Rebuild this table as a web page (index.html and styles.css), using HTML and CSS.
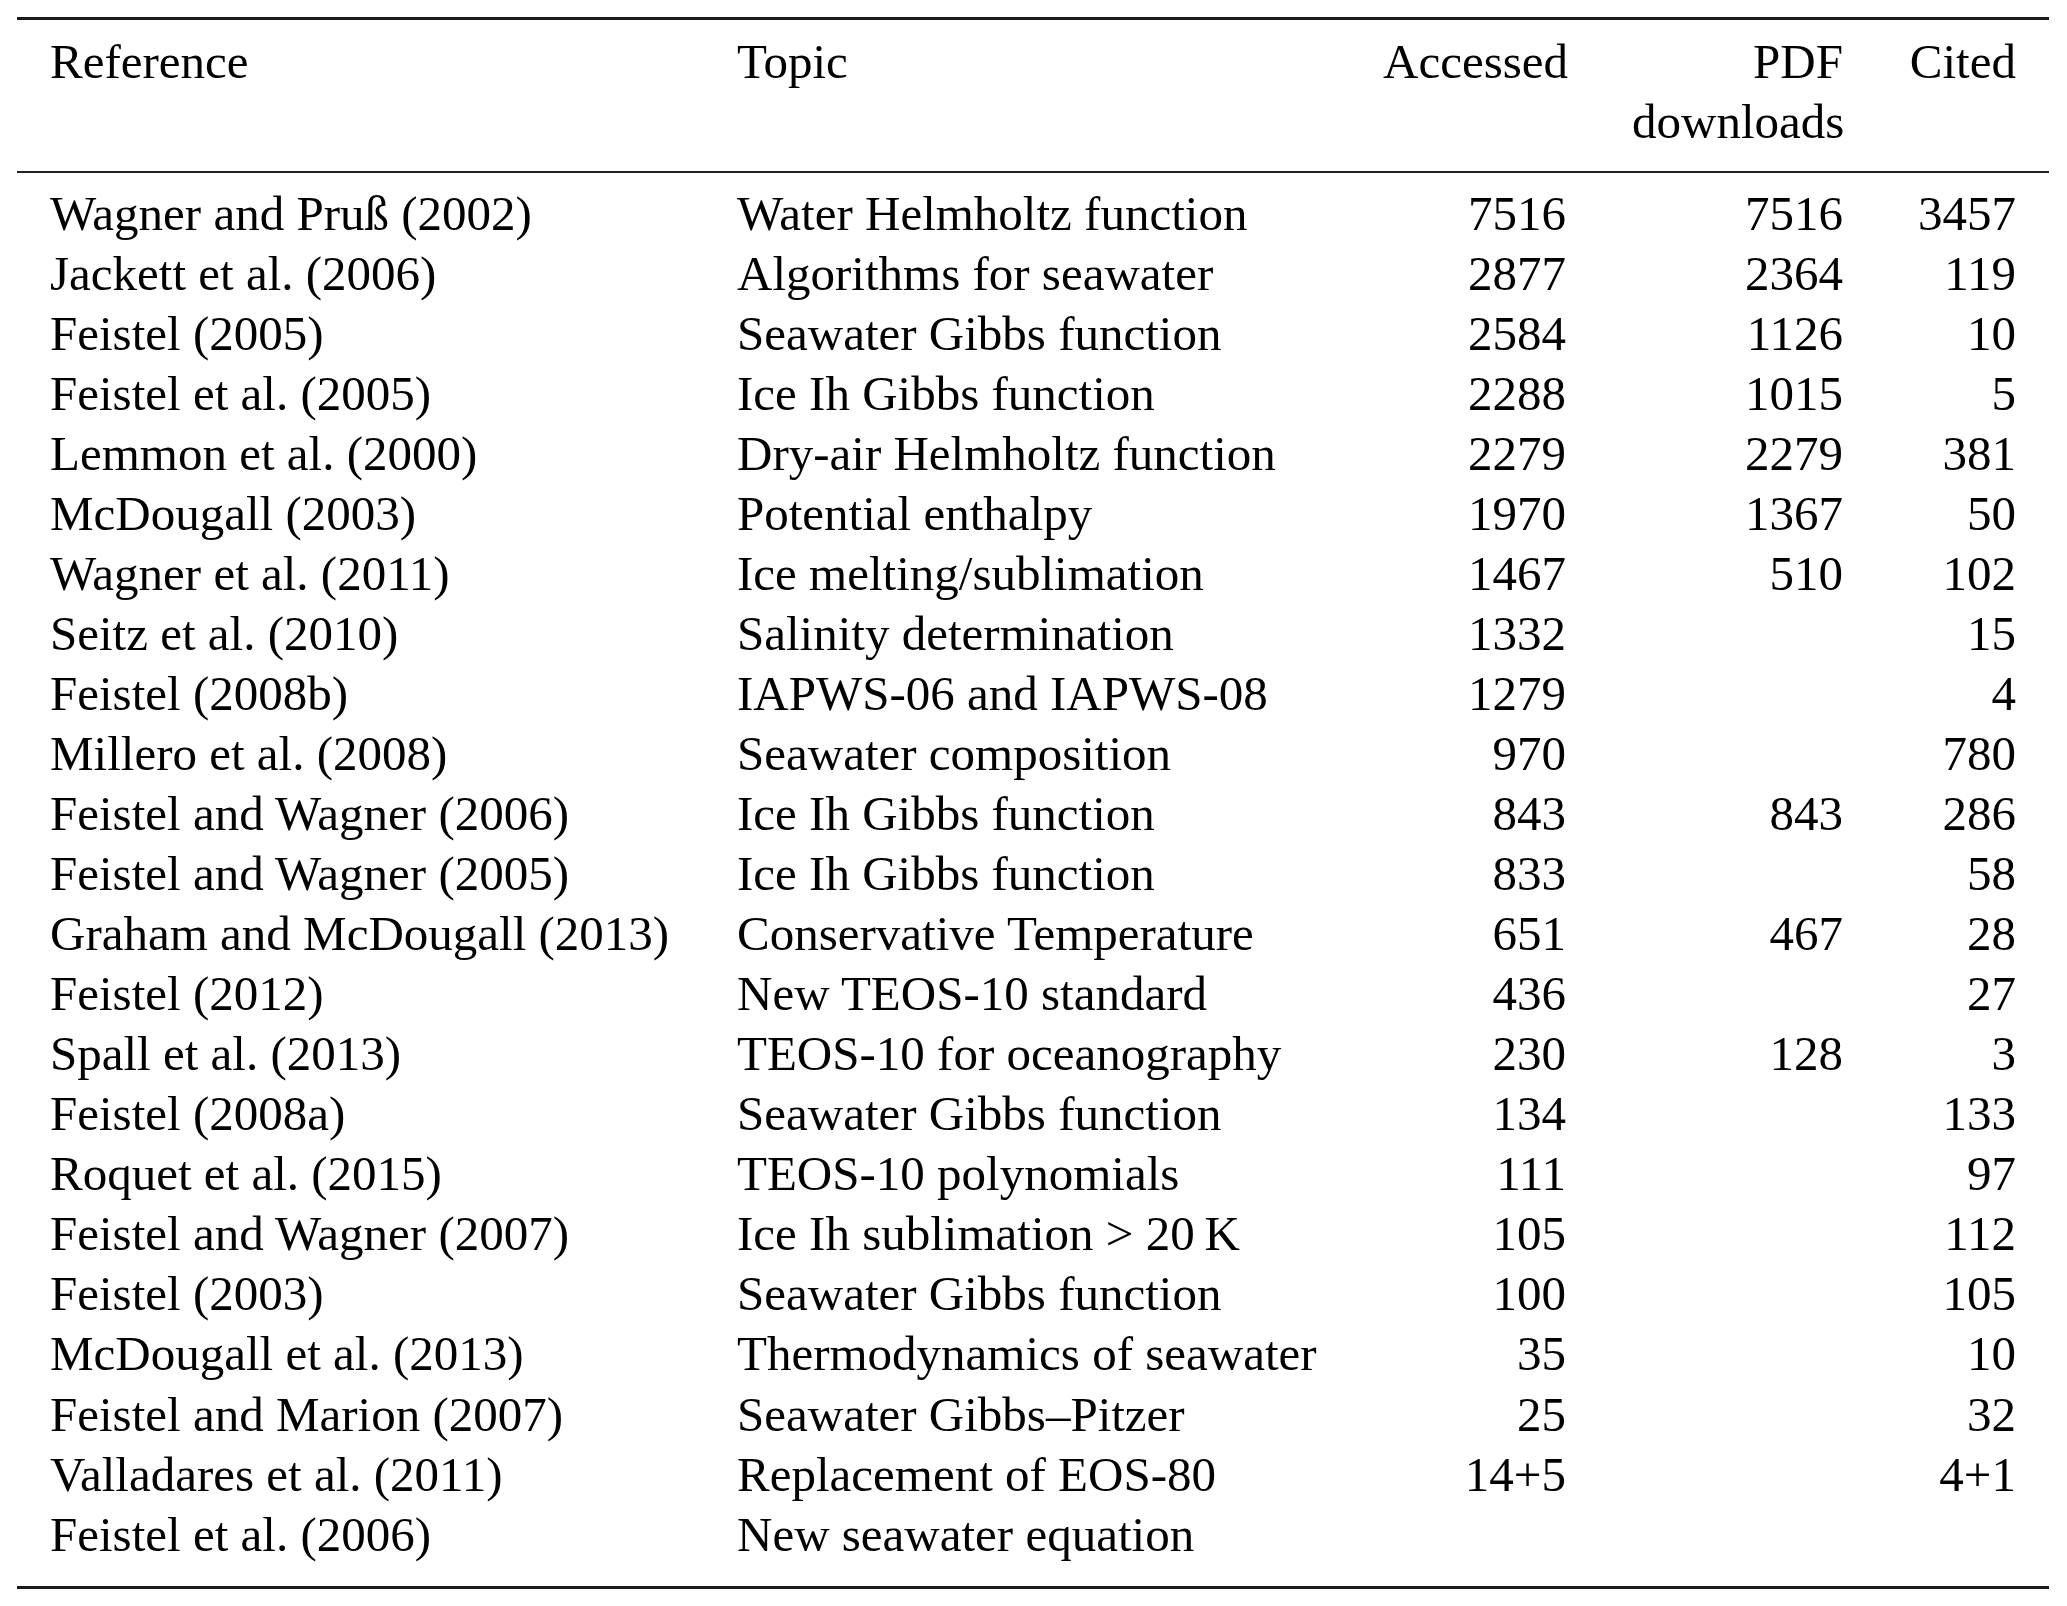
FILE: index.html
```html
<!DOCTYPE html>
<html lang="en">
<head>
<meta charset="utf-8">
<title>TEOS-10 references</title>
<link rel="stylesheet" href="styles.css">
</head>
<body>
<main class="page">
<table class="refs">
  <colgroup>
    <col class="c-ref">
    <col class="c-topic">
    <col class="c-acc">
    <col class="c-pdf">
    <col class="c-cit">
  </colgroup>
  <thead>
    <tr>
      <th class="l">Reference</th>
      <th class="l">Topic</th>
      <th class="r">Accessed</th>
      <th class="r">PDF<br>downloads</th>
      <th class="r">Cited</th>
    </tr>
  </thead>
  <tbody>
    <tr><td>Wagner and Pruß (2002)</td><td>Water Helmholtz function</td><td class="r">7516</td><td class="r">7516</td><td class="r">3457</td></tr>
    <tr><td>Jackett et al. (2006)</td><td>Algorithms for seawater</td><td class="r">2877</td><td class="r">2364</td><td class="r">119</td></tr>
    <tr><td>Feistel (2005)</td><td>Seawater Gibbs function</td><td class="r">2584</td><td class="r">1126</td><td class="r">10</td></tr>
    <tr><td>Feistel et al. (2005)</td><td>Ice Ih Gibbs function</td><td class="r">2288</td><td class="r">1015</td><td class="r">5</td></tr>
    <tr><td>Lemmon et al. (2000)</td><td>Dry-air Helmholtz function</td><td class="r">2279</td><td class="r">2279</td><td class="r">381</td></tr>
    <tr><td>McDougall (2003)</td><td>Potential enthalpy</td><td class="r">1970</td><td class="r">1367</td><td class="r">50</td></tr>
    <tr><td>Wagner et al. (2011)</td><td>Ice melting/sublimation</td><td class="r">1467</td><td class="r">510</td><td class="r">102</td></tr>
    <tr><td>Seitz et al. (2010)</td><td>Salinity determination</td><td class="r">1332</td><td class="r"></td><td class="r">15</td></tr>
    <tr><td>Feistel (2008b)</td><td>IAPWS-06 and IAPWS-08</td><td class="r">1279</td><td class="r"></td><td class="r">4</td></tr>
    <tr><td>Millero et al. (2008)</td><td>Seawater composition</td><td class="r">970</td><td class="r"></td><td class="r">780</td></tr>
    <tr><td>Feistel and Wagner (2006)</td><td>Ice Ih Gibbs function</td><td class="r">843</td><td class="r">843</td><td class="r">286</td></tr>
    <tr><td>Feistel and Wagner (2005)</td><td>Ice Ih Gibbs function</td><td class="r">833</td><td class="r"></td><td class="r">58</td></tr>
    <tr><td>Graham and McDougall (2013)</td><td>Conservative Temperature</td><td class="r">651</td><td class="r">467</td><td class="r">28</td></tr>
    <tr><td>Feistel (2012)</td><td>New TEOS-10 standard</td><td class="r">436</td><td class="r"></td><td class="r">27</td></tr>
    <tr><td>Spall et al. (2013)</td><td>TEOS-10 for oceanography</td><td class="r">230</td><td class="r">128</td><td class="r">3</td></tr>
    <tr><td>Feistel (2008a)</td><td>Seawater Gibbs function</td><td class="r">134</td><td class="r"></td><td class="r">133</td></tr>
    <tr><td>Roquet et al. (2015)</td><td>TEOS-10 polynomials</td><td class="r">111</td><td class="r"></td><td class="r">97</td></tr>
    <tr><td>Feistel and Wagner (2007)</td><td>Ice Ih sublimation &gt; 20&#8201;K</td><td class="r">105</td><td class="r"></td><td class="r">112</td></tr>
    <tr><td>Feistel (2003)</td><td>Seawater Gibbs function</td><td class="r">100</td><td class="r"></td><td class="r">105</td></tr>
    <tr><td>McDougall et al. (2013)</td><td>Thermodynamics of seawater</td><td class="r">35</td><td class="r"></td><td class="r">10</td></tr>
    <tr><td>Feistel and Marion (2007)</td><td>Seawater Gibbs–Pitzer</td><td class="r">25</td><td class="r"></td><td class="r">32</td></tr>
    <tr><td>Valladares et al. (2011)</td><td>Replacement of EOS-80</td><td class="r">14+5</td><td class="r"></td><td class="r">4+1</td></tr>
    <tr><td>Feistel et al. (2006)</td><td>New seawater equation</td><td class="r"></td><td class="r"></td><td class="r"></td></tr>
  </tbody>
</table>
</main>
</body>
</html>
```

FILE: styles.css
```css
html, body {
  margin: 0;
  padding: 0;
  background: #ffffff;
}

.page {
  padding: 17px 0 0 17px;
}

.refs {
  table-layout: fixed;
  width: 2032px;
  border-collapse: separate;
  border-spacing: 0;
  font-family: "Liberation Serif", "Times New Roman", serif;
  font-size: 49px;
  line-height: 60.05px;
  color: #000000;
}

.c-ref { width: 687px; }
.c-topic { width: 646px; }
.c-acc { width: 249px; }
.c-pdf { width: 277px; }
.c-cit { width: 173px; }

.refs th,
.refs td {
  padding: 0 33px;
  white-space: nowrap;
  font-weight: normal;
  vertical-align: top;
  text-align: left;
}

.refs th {
  border-top: 3px solid #1a1a1a;
  border-bottom: 2px solid #222222;
  padding-top: 11.8px;
  padding-bottom: 18.7px;
}

.refs .l { text-align: left; }
.refs .r { text-align: right; }

.refs tbody tr:first-child td {
  padding-top: 11px;
}

.refs tbody tr:last-child td {
  padding-bottom: 21.5px;
  border-bottom: 3px solid #1a1a1a;
}
```
